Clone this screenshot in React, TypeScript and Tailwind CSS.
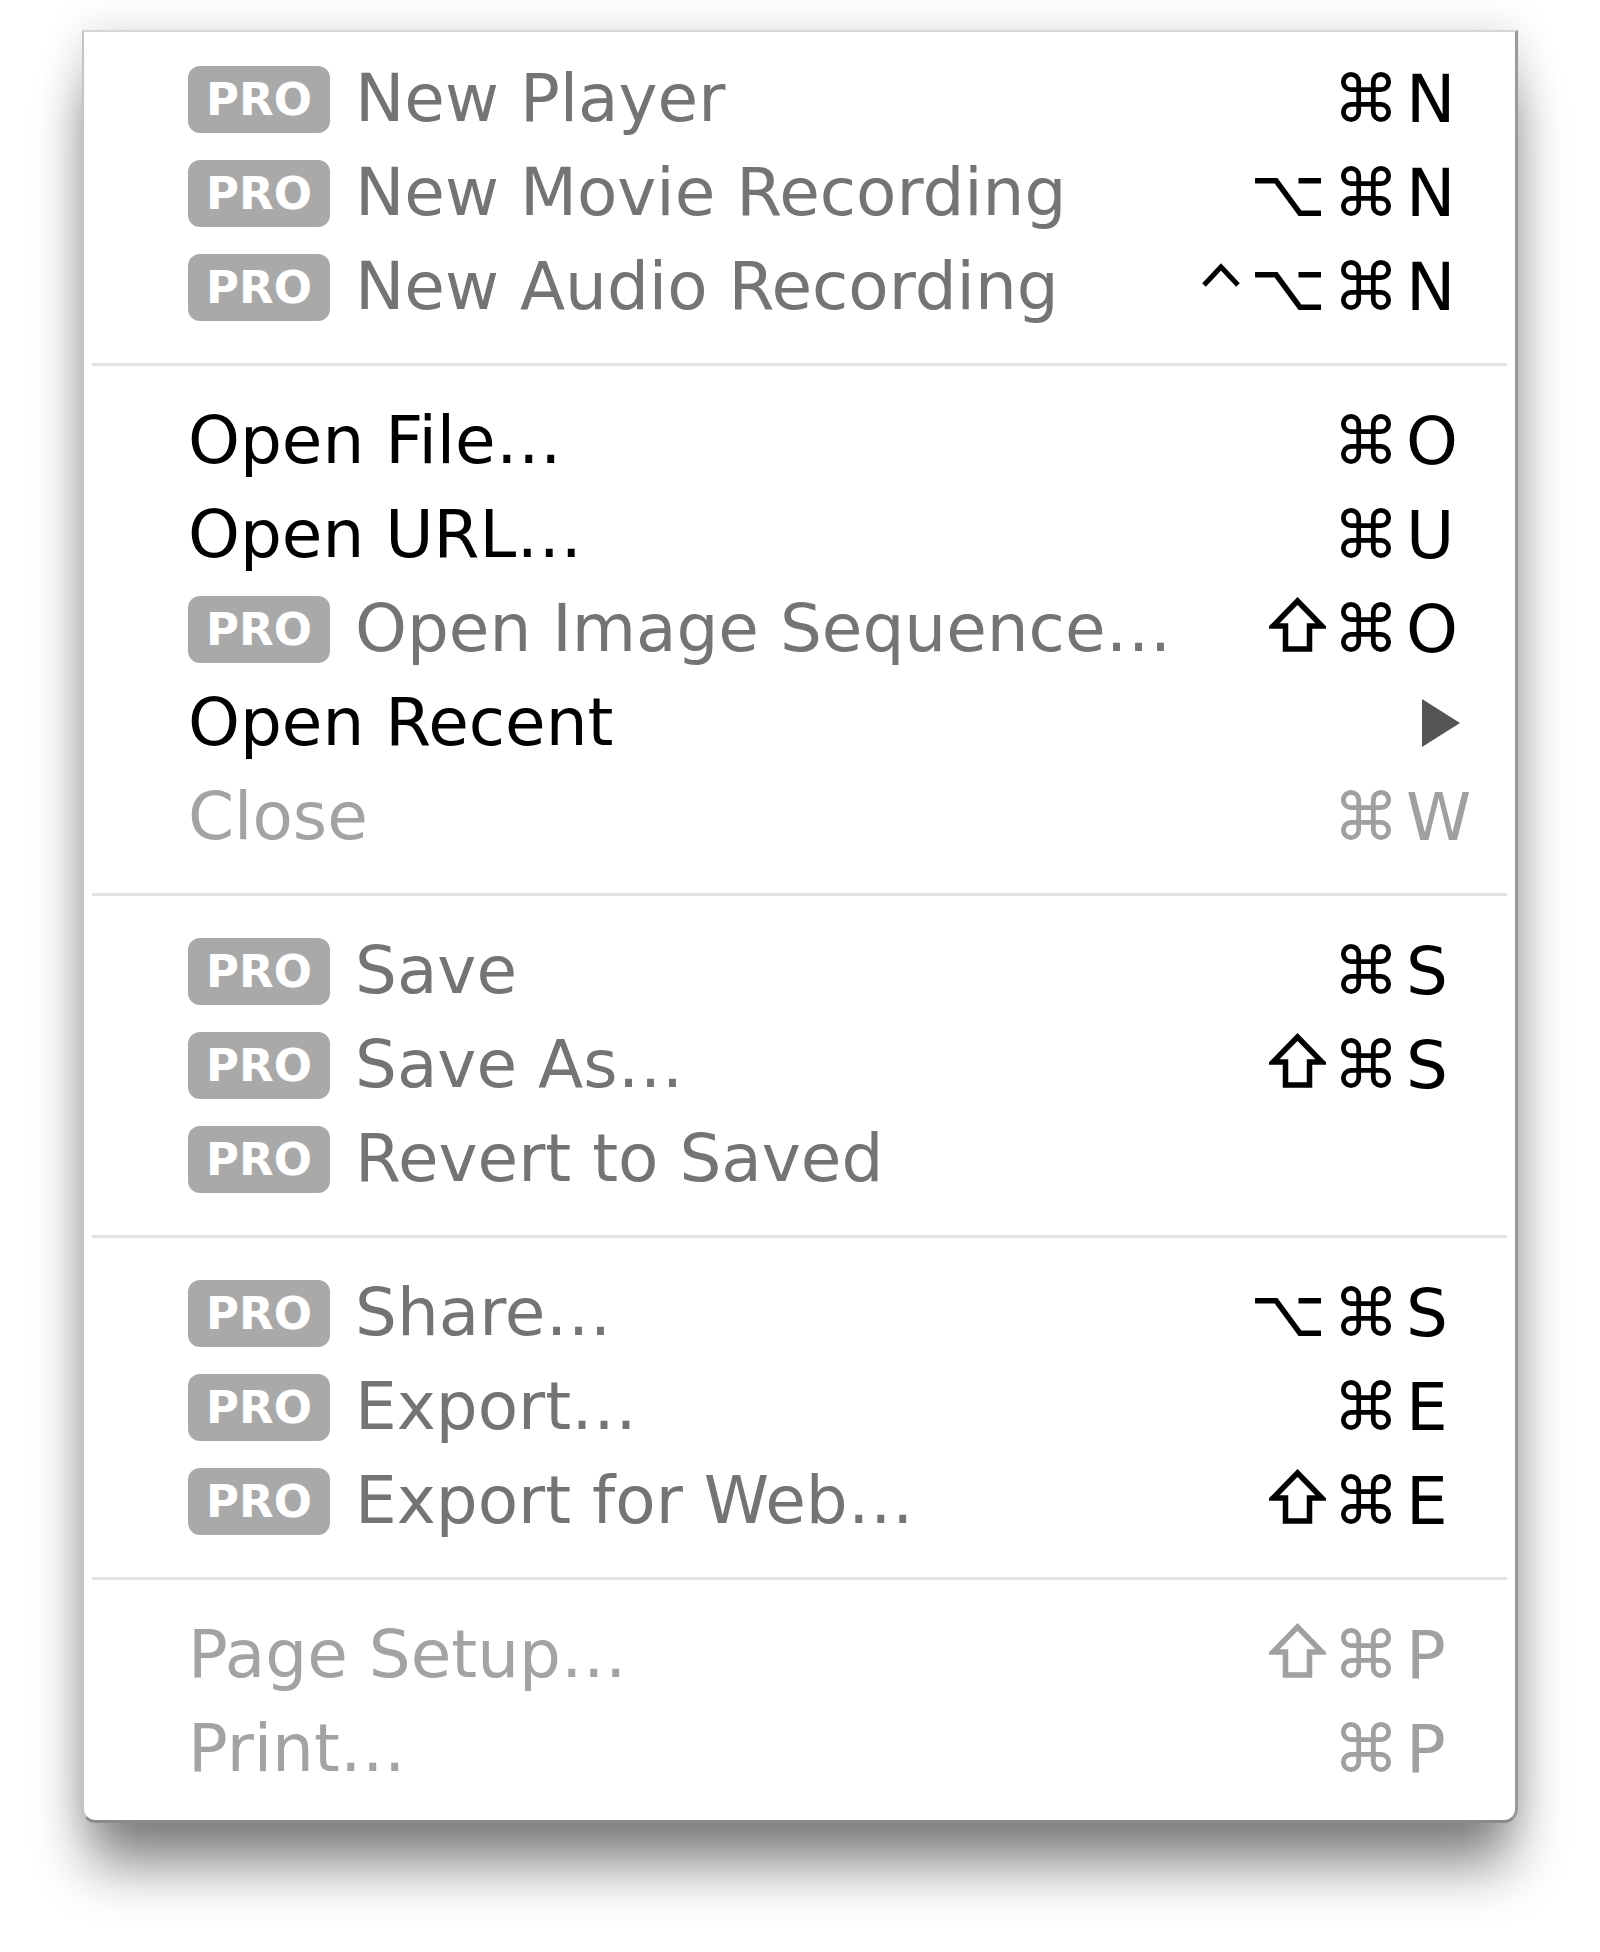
type Mod = 'ctrl' | 'opt' | 'shift';

type Item =
  | { kind: 'sep' }
  | {
      kind: 'item';
      label: string;
      pro?: boolean;
      disabled?: boolean;
      mods?: Mod[];
      cmd?: boolean;
      keyChar?: string;
      submenu?: boolean;
    };

const items: Item[] = [
  { kind: 'item', label: 'New Player', pro: true, cmd: true, keyChar: 'N' },
  { kind: 'item', label: 'New Movie Recording', pro: true, mods: ['opt'], cmd: true, keyChar: 'N' },
  { kind: 'item', label: 'New Audio Recording', pro: true, mods: ['ctrl', 'opt'], cmd: true, keyChar: 'N' },
  { kind: 'sep' },
  { kind: 'item', label: 'Open File…', cmd: true, keyChar: 'O' },
  { kind: 'item', label: 'Open URL…', cmd: true, keyChar: 'U' },
  { kind: 'item', label: 'Open Image Sequence…', pro: true, mods: ['shift'], cmd: true, keyChar: 'O' },
  { kind: 'item', label: 'Open Recent', submenu: true },
  { kind: 'item', label: 'Close', disabled: true, cmd: true, keyChar: 'W' },
  { kind: 'sep' },
  { kind: 'item', label: 'Save', pro: true, cmd: true, keyChar: 'S' },
  { kind: 'item', label: 'Save As…', pro: true, mods: ['shift'], cmd: true, keyChar: 'S' },
  { kind: 'item', label: 'Revert to Saved', pro: true },
  { kind: 'sep' },
  { kind: 'item', label: 'Share…', pro: true, mods: ['opt'], cmd: true, keyChar: 'S' },
  { kind: 'item', label: 'Export…', pro: true, cmd: true, keyChar: 'E' },
  { kind: 'item', label: 'Export for Web…', pro: true, mods: ['shift'], cmd: true, keyChar: 'E' },
  { kind: 'sep' },
  { kind: 'item', label: 'Page Setup…', disabled: true, mods: ['shift'], cmd: true, keyChar: 'P' },
  { kind: 'item', label: 'Print…', disabled: true, cmd: true, keyChar: 'P' },
];

function ProBadge() {
  return (
    <span className="mr-[25px] inline-flex h-[67px] w-[142px] shrink-0 items-center justify-center rounded-[12px] bg-[#a9a9a9] text-[45px] font-bold leading-none text-white">
      PRO
    </span>
  );
}

function SubmenuArrow() {
  return (
    <svg width="40" height="50" viewBox="0 0 40 50" className="mr-[5px]">
      <polygon points="1,1 39,25 1,49" fill="#555555" />
    </svg>
  );
}

// shift / control keys drawn to match the wide outlined glyphs of the menu font
function ShiftKey() {
  return (
    <svg width="57" height="55" viewBox="0 0 57 55" className="mb-[9px]">
      <polygon
        points="28.5,4 53,29 40.5,29 40.5,52 16.5,52 16.5,29 4,29"
        fill="none"
        stroke="currentColor"
        strokeWidth="5.5"
        strokeLinejoin="miter"
      />
    </svg>
  );
}

function ControlKey() {
  return (
    <svg width="40" height="26" viewBox="0 0 40 26" className="-mr-[4px] mb-[24px]">
      <polyline points="3,23 20,5 37,23" fill="none" stroke="currentColor" strokeWidth="5" />
    </svg>
  );
}

function ModKey({ mod }: { mod: Mod }) {
  if (mod === 'shift') return <ShiftKey />;
  if (mod === 'ctrl') return <ControlKey />;
  return <span>⌥</span>;
}

function MenuRow({ item }: { item: Extract<Item, { kind: 'item' }> }) {
  const labelColor = item.disabled ? 'text-[#a3a3a3]' : item.pro ? 'text-[#747474]' : 'text-black';
  const keyColor = item.disabled ? 'text-[#a0a0a0]' : 'text-black';

  return (
    <div className="flex h-[94px] items-center pl-[104px] pr-[49px]">
      {item.pro && <ProBadge />}
      <span className={`flex-1 whitespace-nowrap leading-[94px] ${labelColor}`}>{item.label}</span>
      <div className={`flex h-[94px] w-[160px] items-center justify-end gap-[13px] pr-[7px] ${keyColor}`}>
        {(item.mods ?? []).map((m, i) => (
          <ModKey key={i} mod={m} />
        ))}
      </div>
      <div className={`flex w-[133px] shrink-0 ${keyColor}`}>
        {item.submenu ? (
          <div className="flex w-full justify-end">
            <SubmenuArrow />
          </div>
        ) : (
          <>
            <span className="w-[73px] shrink-0">{item.cmd ? '⌘' : ''}</span>
            <span>{item.keyChar}</span>
          </>
        )}
      </div>
    </div>
  );
}

export default function App() {
  return (
    <div className="min-h-[1952px] w-[1600px] bg-white pl-[82px] pt-[30px] font-['DejaVu_Sans',sans-serif] text-[66px]">
      <div className="w-[1436px] rounded-b-[14px] border-2 border-b-[3px] border-r-[3px] border-t-[#d6d6d6] border-l-[#c4c4c4] border-r-[#9a9a9a] border-b-[#8a8a8a] bg-white pb-[24px] pt-[20px] shadow-[0_50px_55px_-8px_rgba(0,0,0,0.48),0_0_40px_rgba(0,0,0,0.14)]">
        {items.map((item, i) =>
          item.kind === 'sep' ? (
            <div key={i} className="flex h-[60px] items-center px-[8px]">
              <div className="h-[3px] w-full bg-[#e3e3e3]" />
            </div>
          ) : (
            <MenuRow key={i} item={item} />
          )
        )}
      </div>
    </div>
  );
}
